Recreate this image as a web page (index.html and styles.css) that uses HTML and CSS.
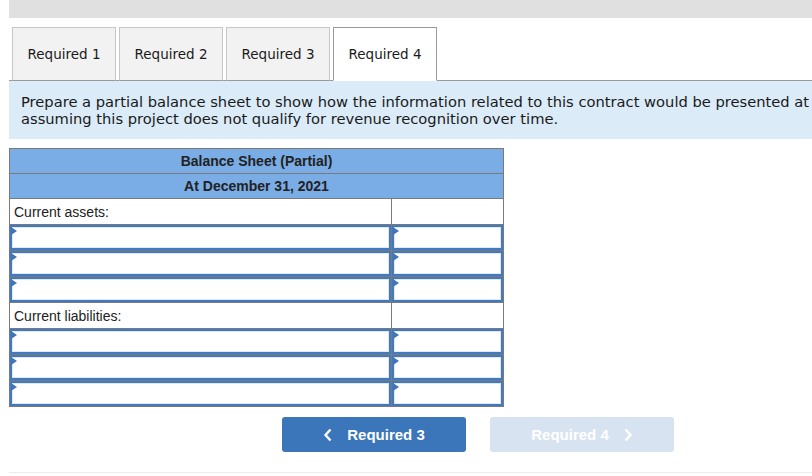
FILE: index.html
```html
<!DOCTYPE html>
<html lang="en">
<head>
    <meta charset="UTF-8">
    <title>Required 4 - Balance Sheet</title>
    <link rel="stylesheet" href="styles.css">
</head>
<body>
    <div class="page">
        <div class="top-bar"></div>

        <ul class="tabs">
            <li class="tab">Required 1</li>
            <li class="tab">Required 2</li>
            <li class="tab">Required 3</li>
            <li class="tab active">Required 4</li>
        </ul>

        <div class="instructions">
            Prepare a partial balance sheet to show how the information related to this contract would be presented at<br>
            assuming this project does not qualify for revenue recognition over time.
        </div>

        <table class="sheet">
            <thead>
                <tr><th colspan="2">Balance Sheet (Partial)</th></tr>
                <tr><th colspan="2">At December 31, 2021</th></tr>
            </thead>
            <tbody>
                <tr>
                    <td class="label">Current assets:</td>
                    <td></td>
                </tr>
                <tr>
                    <td class="entry"><div class="field"></div></td>
                    <td class="entry"><div class="field"></div></td>
                </tr>
                <tr>
                    <td class="entry"><div class="field"></div></td>
                    <td class="entry"><div class="field"></div></td>
                </tr>
                <tr>
                    <td class="entry"><div class="field"></div></td>
                    <td class="entry"><div class="field"></div></td>
                </tr>
                <tr>
                    <td class="label">Current liabilities:</td>
                    <td></td>
                </tr>
                <tr>
                    <td class="entry"><div class="field"></div></td>
                    <td class="entry"><div class="field"></div></td>
                </tr>
                <tr>
                    <td class="entry"><div class="field"></div></td>
                    <td class="entry"><div class="field"></div></td>
                </tr>
                <tr>
                    <td class="entry"><div class="field"></div></td>
                    <td class="entry"><div class="field"></div></td>
                </tr>
            </tbody>
        </table>

        <div class="nav">
            <button class="nav-btn prev">
                <svg width="10" height="14" viewBox="0 0 10 14"><path d="M7.5 1.5 L2.5 7 L7.5 12.5" fill="none" stroke="#fff" stroke-width="2.4"/></svg>
                Required 3
            </button>
            <button class="nav-btn next" disabled>
                Required 4
                <svg width="10" height="14" viewBox="0 0 10 14"><path d="M2.5 1.5 L7.5 7 L2.5 12.5" fill="none" stroke="#fff" stroke-width="2.4"/></svg>
            </button>
        </div>
    </div>
</body>
</html>
```

FILE: styles.css
```css
html, body {
    margin: 0;
    padding: 0;
    overflow: hidden;
    background-color: white;
}
.page {
    width: 940px;
    padding-left: 9px;
    font-family: "DejaVu Sans", Verdana, sans-serif;
    color: #1a1a1a;
}
.top-bar {
    height: 18px;
    background-color: #e0e0e0;
}
.tabs {
    list-style: none;
    display: flex;
    gap: 3px;
    margin: 9px 0 0 0;
    padding: 0 0 0 3px;
    border-bottom: 1px solid #9a9a9a;
}
.tab {
    box-sizing: border-box;
    width: 104px;
    height: 54px;
    margin-bottom: -1px;
    display: flex;
    align-items: center;
    justify-content: center;
    font-size: 13.5px;
    background-color: #f2f2f2;
    border: 1px solid #c6c6c6;
    border-bottom-color: #9a9a9a;
}
.tab.active {
    background-color: white;
    border-color: #9a9a9a;
    border-bottom-color: white;
}
.instructions {
    background-color: #dbebf8;
    padding: 12px;
    font-size: 14.7px;
    line-height: 17px;
    white-space: nowrap;
    overflow: hidden;
}
.sheet {
    margin-top: 9px;
    width: 495px;
    border-collapse: collapse;
    font-family: "Liberation Sans", Arial, sans-serif;
    font-size: 14px;
    color: #222;
}
.sheet th, .sheet td {
    border: 1px solid #7a7a7a;
    padding: 0;
}
.sheet th {
    background-color: #7aace5;
    height: 24px;
    font-weight: bold;
    text-align: center;
}
.sheet td {
    height: 25px;
}
.sheet td:first-child {
    width: 377px;
}
.sheet .label {
    padding-left: 4px;
}
.field {
    position: relative;
    box-sizing: border-box;
    height: 25px;
    border: 2px solid #4379bd;
    box-shadow: inset 0 0 0 1px #dde9f7;
    background-color: white;
}
.field::before {
    content: "";
    position: absolute;
    left: -1px;
    top: 0;
    border-top: 4px solid transparent;
    border-bottom: 4px solid transparent;
    border-left: 6px solid #3f75bb;
}
.nav {
    display: flex;
    gap: 24px;
    padding: 10px 0 20px 273px;
    border-bottom: 1px solid #ececec;
}
.nav-btn {
    width: 184px;
    height: 35px;
    border: none;
    border-radius: 3px;
    display: flex;
    align-items: center;
    justify-content: center;
    gap: 14px;
    font-family: "Liberation Sans", Arial, sans-serif;
    font-size: 15px;
    font-weight: bold;
    color: white;
    cursor: pointer;
}
.prev {
    background-color: #3a76b9;
}
.next {
    background-color: #d7e3f1;
    cursor: default;
}
```
